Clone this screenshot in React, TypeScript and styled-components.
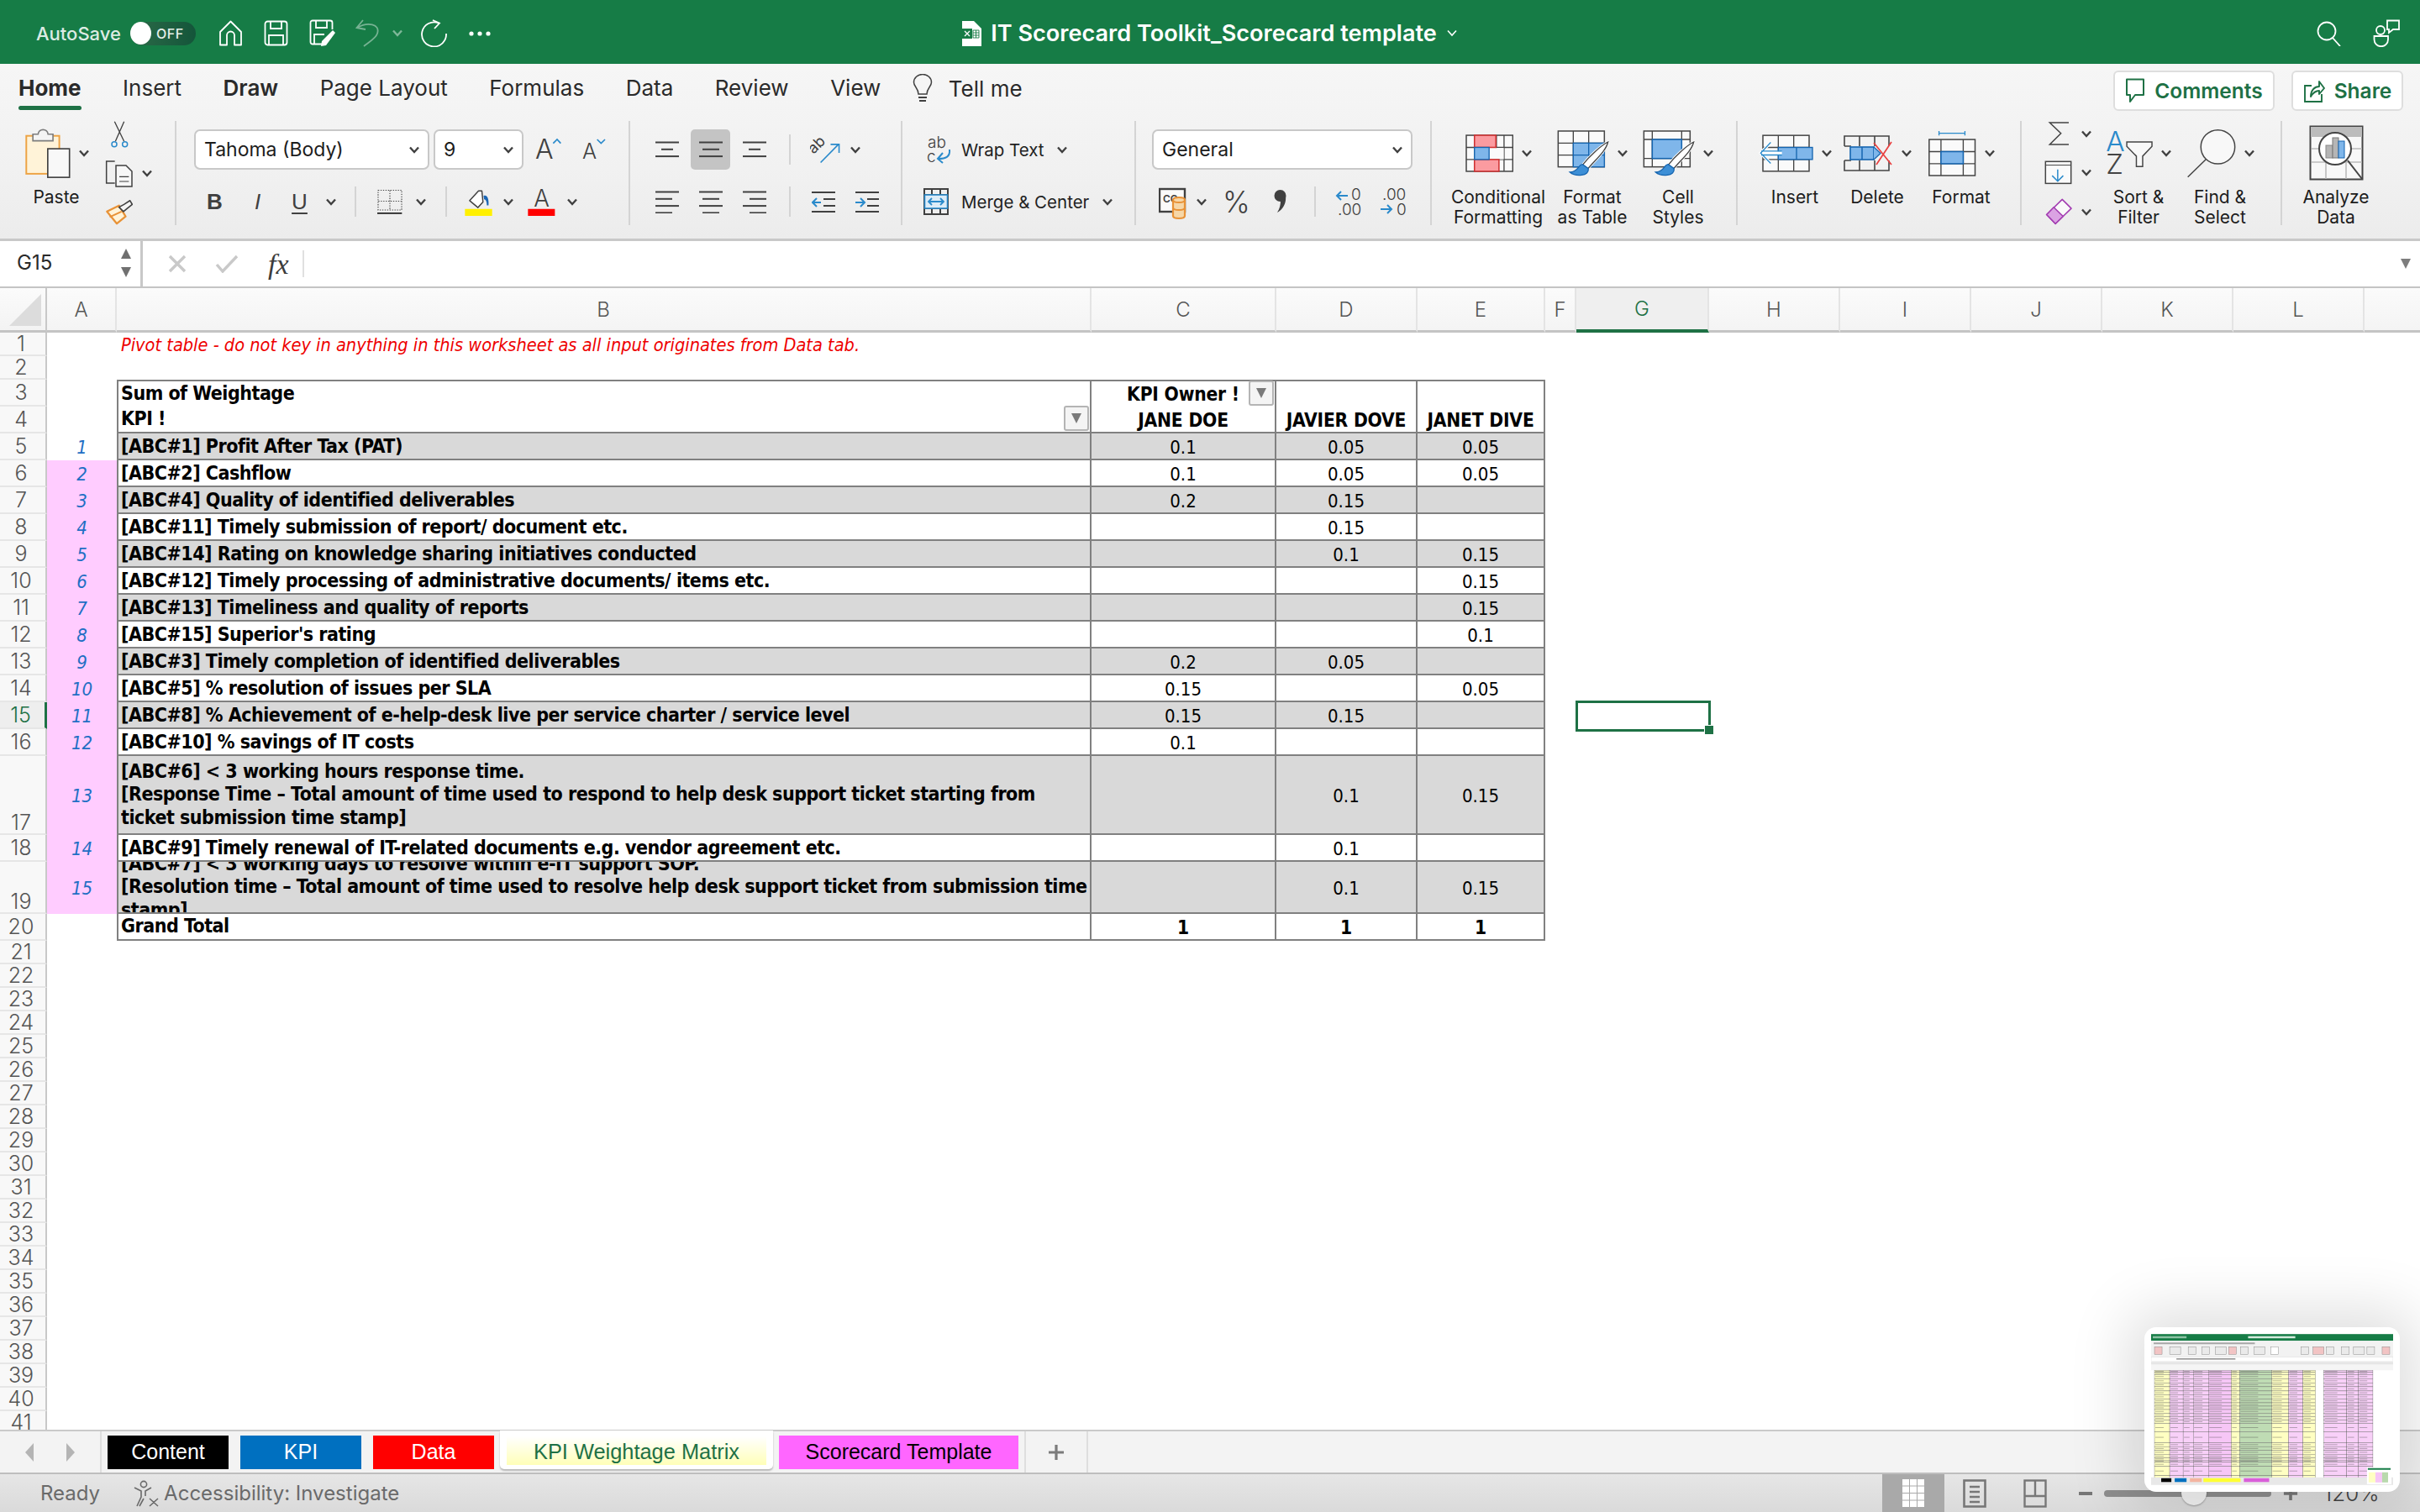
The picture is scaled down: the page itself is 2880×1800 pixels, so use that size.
import React from "react";
import styled, { createGlobalStyle, css } from "styled-components";

const UI = `Inter, "Noto Sans", sans-serif`;
const CELL = `"DejaVu Sans", "Noto Sans", sans-serif`;
const INK = "#404040";
const BLUE = "#2a8acb";
const SEL = "#1e7145";

const Global = createGlobalStyle`
  html, body { margin: 0; padding: 0; width: 2880px; height: 1800px; overflow: hidden; background: #fff; }
  #root { width: 2880px; height: 1800px; }
  * { box-sizing: border-box; }
`;

const Page = styled.div`
  position: relative;
  width: 2880px;
  height: 1800px;
  display: flex;
  flex-direction: column;
  overflow: hidden;
  font-family: ${UI};
  color: #222;
`;

/* ---------- title bar ---------- */
const TitleBar = styled.header`
  height: 76px;
  flex: none;
  background: #167c46;
  display: grid;
  grid-template-columns: 1fr auto 1fr;
  align-items: center;
  color: #fff;
  padding-top: 3px;
`;
const TitleLeft = styled.div`
  display: flex;
  align-items: center;
  padding-left: 43px;
`;
const AutoSaveLabel = styled.span`
  font-size: 22px;
  font-weight: 500;
  color: #dcebe3;
  width: 112px;
`;
const Toggle = styled.div`
  width: 78px;
  height: 28px;
  border-radius: 14px;
  background: linear-gradient(90deg, #2c6b48, #14553a);
  display: flex;
  align-items: center;
  gap: 6px;
  font-size: 16px;
  font-weight: 500;
  letter-spacing: 0.5px;
  color: #e6f0ea;
`;
const Knob = styled.span`
  width: 25px;
  height: 27px;
  border-radius: 50%;
  background: #fff;
  flex: none;
`;
const TitleTool = styled.span<{ $ml: number }>`
  display: flex;
  margin-left: ${(p) => p.$ml}px;
`;
const DocTitle = styled.div`
  display: flex;
  align-items: center;
  font-size: 27.1px;
  font-weight: 600;
  gap: 11px;
  white-space: nowrap;
`;
const TitleRight = styled.div`
  display: flex;
  justify-content: flex-end;
  align-items: center;
  gap: 38px;
  padding-right: 24px;
`;

/* ---------- ribbon ---------- */
const RibbonShell = styled.section`
  flex: none;
  height: 208px;
  background: linear-gradient(180deg, #f6f6f6 0%, #f1f1f1 60%, #ececec 100%);
`;
const RibbonTabs = styled.nav`
  height: 68px;
  padding: 4px 20px 0 22px;
  display: flex;
  align-items: flex-start;
  gap: 49.5px;
`;
const RibbonTab = styled.span<{ $active?: boolean; $bold?: boolean }>`
  position: relative;
  font-size: 26px;
  line-height: 50px;
  height: 51px;
  color: #2a2a2a;
  font-weight: ${(p) => (p.$active ? 700 : p.$bold ? 600 : 400)};
  white-space: nowrap;
  ${(p) =>
    p.$active &&
    css`
      &::after {
        content: "";
        position: absolute;
        left: 0;
        right: 0;
        bottom: 0;
        height: 5px;
        border-radius: 3px;
        background: ${SEL};
      }
    `}
`;
const TellMe = styled.span`
  display: flex;
  align-items: center;
  gap: 19px;
  height: 50px;
  margin-left: -12px;
  font-size: 26px;
  color: #2a2a2a;
`;
const RibbonActions = styled.div`
  margin-left: auto;
  display: flex;
  gap: 20px;
  padding-top: 4px;
`;
const ActionButton = styled.button<{ $w: number }>`
  width: ${(p) => p.$w}px;
  height: 48px;
  background: #fff;
  border: 2px solid #dedede;
  border-radius: 6px;
  display: flex;
  align-items: center;
  justify-content: center;
  gap: 11px;
  font-family: ${UI};
  font-size: 24.5px;
  font-weight: 600;
  color: ${SEL};
  padding: 0;
`;
const Ribbon = styled.div`
  height: 140px;
  display: flex;
`;
const Group = styled.div<{ $w: number; $pl?: number; $last?: boolean }>`
  position: relative;
  width: ${(p) => p.$w}px;
  flex: none;
  height: 124px;
  padding-left: ${(p) => p.$pl ?? 0}px;
  display: flex;
  ${(p) => !p.$last && `border-right: 2px solid #d4d4d4;`}
`;
const RowPair = styled.div`
  width: 100%;
  height: 134px;
  display: grid;
  grid-template-rows: 58px 76px;
`;
const ToolRow = styled.div<{ $top?: boolean }>`
  display: flex;
  align-items: center;
  ${(p) => p.$top && `padding-top: 10px;`}
`;
const Tool = styled.span<{ $ml?: number }>`
  display: inline-flex;
  flex: none;
  align-items: center;
  justify-content: center;
  margin-left: ${(p) => p.$ml ?? 0}px;
`;
const GlyphB = styled.span<{ $ml: number; $i?: boolean; $u?: boolean; $w: number }>`
  margin-left: ${(p) => p.$ml}px;
  width: ${(p) => p.$w}px;
  flex: none;
  font-family: "Liberation Sans", sans-serif;
  font-size: 26px;
  line-height: 30px;
  text-align: center;
  color: ${INK};
  font-weight: ${(p) => (p.$i || p.$u ? 400 : 700)};
  font-style: ${(p) => (p.$i ? "italic" : "normal")};
  ${(p) => p.$u && `text-decoration: underline; text-underline-offset: 4px;`}
`;
const VSep = styled.span<{ $ml: number }>`
  width: 2px;
  height: 36px;
  background: #d4d4d4;
  flex: none;
  margin-left: ${(p) => p.$ml}px;
`;
const Select = styled.div<{ $w: number; $ml?: number }>`
  width: ${(p) => p.$w}px;
  height: 48px;
  flex: none;
  margin-left: ${(p) => p.$ml ?? 0}px;
  background: #fff;
  border: 2px solid #c8c8c8;
  border-radius: 7px;
  display: flex;
  align-items: center;
  justify-content: space-between;
  padding: 0 10px 0 10px;
  font-size: 23px;
  color: #1c1c1c;
`;
const AlignActive = styled.span<{ $ml: number }>`
  width: 47px;
  height: 48px;
  margin-left: ${(p) => p.$ml}px;
  flex: none;
  background: #c4c4c4;
  border-radius: 5px;
  display: flex;
  align-items: center;
  justify-content: center;
`;
const WrapLabel = styled.span<{ $ml: number; $w: number }>`
  margin-left: ${(p) => p.$ml}px;
  width: ${(p) => p.$w}px;
  flex: none;
  font-size: 20.5px;
  color: #222;
  white-space: nowrap;
`;
const Percent = styled.span<{ $ml: number }>`
  margin-left: ${(p) => p.$ml}px;
  width: 32px;
  flex: none;
  font-size: 35px;
  font-weight: 300;
  color: ${INK};
  text-align: center;
`;
const BigTool = styled.div<{ $w: number; $ml?: number }>`
  width: ${(p) => p.$w}px;
  margin-left: ${(p) => p.$ml ?? 0}px;
  flex: none;
  display: flex;
  flex-direction: column;
  align-items: center;
`;
const BigTop = styled.div`
  height: 79px;
  flex: none;
  padding-bottom: 3px;
  display: flex;
  align-items: center;
  gap: 10px;
`;
const BigLabel = styled.div`
  flex: none;
  font-size: 21px;
  line-height: 24px;
  text-align: center;
  color: #1c1c1c;
  white-space: nowrap;
`;
const SmallColumn = styled.div<{ $ml: number }>`
  width: 64px;
  margin-left: ${(p) => p.$ml}px;
  height: 124px;
  flex: none;
  display: flex;
  flex-direction: column;
  justify-content: space-between;
`;
const SmallItem = styled.div`
  display: flex;
  align-items: center;
  gap: 11px;
`;
const ItemCell = styled.span<{ $w: number }>`
  width: ${(p) => p.$w}px;
  display: flex;
  justify-content: center;
  flex: none;
`;

/* ---------- formula bar ---------- */
const FormulaBar = styled.div`
  flex: none;
  height: 59px;
  display: flex;
  align-items: center;
  background: #fff;
  border-top: 3px solid #c8c8c8;
  border-bottom: 2px solid #c4c4c4;
`;
const NameBox = styled.div`
  width: 170px;
  height: 100%;
  flex: none;
  display: flex;
  align-items: center;
  justify-content: space-between;
  padding: 0 10px 3px 20px;
  border-right: 3px solid #c8c8c8;
  font-size: 24px;
  color: #2a2a2a;
`;
const Spinner = styled.span`
  display: flex;
  flex-direction: column;
  gap: 8px;
`;
const Fx = styled.span`
  margin-left: 35px;
  width: 30px;
  padding-top: 1px;
  font-family: "Liberation Serif", serif;
  font-style: italic;
  font-size: 34px;
  color: #3c3c3c;
`;
const FormulaSep = styled.span`
  width: 2px;
  height: 32px;
  background: #e0e0e0;
  margin-left: 11px;
`;
const FormulaEnd = styled.span`
  margin-left: auto;
  padding-right: 10px;
  display: flex;
`;

/* ---------- sheet ---------- */
const SheetViewport = styled.div`
  flex: 1;
  min-height: 0;
  overflow: hidden;
  background: #fff;
`;
const Sheet = styled.table`
  table-layout: fixed;
  border-collapse: separate;
  border-spacing: 0;
  width: 2970px;
  font-family: ${CELL};
  font-stretch: condensed;
  font-size: 22px;
  color: #000;
`;
const Row = styled.tr<{ $h: number }>`
  height: ${(p) => p.$h}px;
`;
const Corner = styled.th`
  padding: 0;
  background: linear-gradient(180deg, #fbfbfb, #f3f3f3);
  border-right: 2px solid #c8c8c8;
  border-bottom: 3px solid #c4c4c4;
  position: relative;
  &::after {
    content: "";
    position: absolute;
    right: 5px;
    bottom: 5px;
    border-style: solid;
    border-width: 0 0 38px 38px;
    border-color: transparent transparent #dcdcdc transparent;
  }
`;
const ColHead = styled.th<{ $sel?: boolean }>`
  padding: 0;
  font-family: ${UI};
  font-weight: 300;
  font-size: 24px;
  text-align: center;
  color: ${(p) => (p.$sel ? SEL : "#555")};
  background: ${(p) => (p.$sel ? "#efefef" : "linear-gradient(180deg, #fbfbfb, #f4f4f4)")};
  border-right: 2px solid #e4e4e4;
  border-bottom: ${(p) => (p.$sel ? `4px solid ${SEL}` : "3px solid #c4c4c4")};
`;
const RowHead = styled.th<{ $sel?: boolean; $tall?: boolean }>`
  padding: 0 4px 0 0;
  font-family: ${UI};
  font-stretch: normal;
  font-weight: 300;
  font-size: 25px;
  line-height: 26px;
  text-align: center;
  vertical-align: ${(p) => (p.$tall ? "bottom" : "middle")};
  color: ${(p) => (p.$sel ? SEL : "#555")};
  background: ${(p) => (p.$sel ? "#eeeeee" : "#f8f8f8")};
  border-bottom: 2px solid #e6e6e6;
  border-right: ${(p) => (p.$sel ? `3px solid ${SEL}` : "2px solid #c8c8c8")};
`;
const NumCell = styled.td<{ $pink?: boolean }>`
  padding: 0;
  text-align: center;
  font-style: italic;
  font-size: 22px;
  color: #1f6fc4;
  background: ${(p) => (p.$pink ? "#ffccff" : "#fff")};
`;
const Note = styled.td`
  padding: 0 0 0 5px;
  color: #ee0000;
  font-style: italic;
  font-size: 21.6px;
  white-space: nowrap;
  overflow: visible;
`;
const LINE = "2px solid #808080";
const KpiCell = styled.td<{ $gray?: boolean; $top?: boolean; $noBottom?: boolean; $up?: boolean }>`
  position: relative;
  padding: 0 0 ${(p) => (p.$up ? 3 : 0)}px 3px;
  font-weight: 700;
  font-size: 23px;
  letter-spacing: -0.5px;
  white-space: nowrap;
  vertical-align: middle;
  background: ${(p) => (p.$gray ? "#d9d9d9" : "#fff")};
  border-left: ${LINE};
  border-right: ${LINE};
  ${(p) => !p.$noBottom && `border-bottom: ${LINE};`}
  ${(p) => p.$top && `border-top: ${LINE};`}
`;
const ValCell = styled.td<{ $gray?: boolean; $top?: boolean; $noBottom?: boolean; $bold?: boolean }>`
  position: relative;
  padding: 2px 0 0;
  text-align: center;
  white-space: nowrap;
  font-weight: ${(p) => (p.$bold ? 700 : 400)};
  ${(p) => p.$bold && `font-size: 22.6px; letter-spacing: -0.2px;`}
  background: ${(p) => (p.$gray ? "#d9d9d9" : "#fff")};
  border-right: ${LINE};
  ${(p) => !p.$noBottom && `border-bottom: ${LINE};`}
  ${(p) => p.$top && `border-top: ${LINE}; padding: 0 0 1px;`}
`;
const Blank = styled.td`
  padding: 0;
`;
const SelectedCell = styled.td`
  position: relative;
  padding: 0;
  &::after {
    content: "";
    position: absolute;
    inset: -2px -2px -3px -1px;
    border: 3px solid ${SEL};
  }
  &::before {
    content: "";
    position: absolute;
    z-index: 1;
    right: -6px;
    bottom: -7px;
    width: 10px;
    height: 10px;
    background: ${SEL};
    border: 1px solid #fff;
  }
`;
const Clip = styled.div<{ $h: number }>`
  height: ${(p) => p.$h}px;
  line-height: 27.5px;
  overflow: hidden;
  display: flex;
  flex-direction: column;
  justify-content: center;
`;
const ClipLine = styled.div`
  flex: none;
`;
const FilterBtn = styled.span`
  position: absolute;
  right: 1px;
  bottom: 1px;
  width: 30px;
  height: 30px;
  background: #f4f4f4;
  border: 2px solid #b4b4b4;
  border-radius: 3px;
  display: flex;
  align-items: center;
  justify-content: center;
`;

/* ---------- sheet tabs and status ---------- */
const TabBar = styled.div`
  flex: none;
  height: 53px;
  background: #f3f3f3;
  border-top: 2px solid #cacaca;
  border-bottom: 2px solid #bebebe;
  display: flex;
  align-items: center;
`;
const TabNav = styled.div`
  width: 121px;
  height: 100%;
  flex: none;
  display: flex;
  align-items: center;
  gap: 37px;
  padding-left: 29px;
  border-right: 2px solid #dedede;
`;
const SheetTab = styled.div<{ $bg: string; $fg: string; $w: number }>`
  width: ${(p) => p.$w}px;
  height: 40px;
  margin-left: 7px;
  margin-right: 7px;
  flex: none;
  display: flex;
  align-items: center;
  justify-content: center;
  background: ${(p) => p.$bg};
  color: ${(p) => p.$fg};
  font-family: "Liberation Sans", sans-serif;
  font-size: 25px;
`;
const ActiveTab = styled.div`
  width: 325px;
  height: 46px;
  flex: none;
  margin: -6px 0 0 0;
  padding: 7px 8px 6px;
  background: #fff;
  border-radius: 0 0 5px 5px;
  box-shadow: 0 2px 2px rgba(0, 0, 0, 0.25);
`;
const ActiveInner = styled.div`
  height: 34px;
  padding-top: 3px;
  display: flex;
  align-items: center;
  justify-content: center;
  background: linear-gradient(180deg, #ffffff 0%, #ffffb8 100%);
  color: ${SEL};
  font-family: "Liberation Sans", sans-serif;
  font-weight: 400;
  font-size: 25.4px;
`;
const AddTab = styled.div`
  width: 76px;
  height: 100%;
  flex: none;
  display: flex;
  align-items: center;
  justify-content: center;
  border-left: 2px solid #dedede;
  border-right: 2px solid #dedede;
`;
const StatusBar = styled.footer`
  flex: none;
  height: 45px;
  background: linear-gradient(180deg, #e6e6e6, #dadada);
  display: flex;
  align-items: center;
  font-size: 24px;
  color: #6a6a6a;
  padding-left: 48px;
`;
const StatusText = styled.span<{ $ml?: number }>`
  margin-left: ${(p) => p.$ml ?? 0}px;
  white-space: nowrap;
`;
const StatusRight = styled.div`
  margin-left: auto;
  height: 100%;
  display: flex;
  align-items: center;
  padding-right: 50px;
`;
const ViewBtn = styled.span<{ $active?: boolean; $w: number }>`
  width: ${(p) => p.$w}px;
  height: 100%;
  display: flex;
  align-items: center;
  justify-content: center;
  ${(p) => p.$active && `background: #a9a9a9;`}
`;
const Minus = styled.span`
  width: 16px;
  height: 4px;
  margin-left: 16px;
  background: #777;
  flex: none;
`;
const Slider = styled.span`
  position: relative;
  width: 199px;
  height: 8px;
  margin: 0 14px;
  flex: none;
  border-radius: 4px;
  background: #8e8e8e;
  &::after {
    content: "";
    position: absolute;
    left: 92px;
    top: -12px;
    width: 30px;
    height: 30px;
    border-radius: 50%;
    background: #f4f4f4;
    box-shadow: 0 1px 2px rgba(0, 0, 0, 0.3);
  }
`;
const Zoom = styled.span`
  margin-left: 30px;
  width: 65px;
  font-size: 26px;
  font-weight: 300;
  color: #444;
`;
const Thumb = styled.aside`
  position: absolute;
  left: 2552px;
  top: 1580px;
  width: 304px;
  height: 196px;
  padding: 8px;
  background: #fff;
  border-radius: 14px;
  box-shadow: 0 0 70px 20px rgba(0, 0, 0, 0.13);
`;

/* ---------- icons ---------- */
const Svg = styled.svg`
  display: block;
  flex: none;
`;
type P = { w?: number; h?: number; c?: string };

const Chev = ({ c = INK }: P) => (
  <Svg width={12} height={9} viewBox="0 0 12 9">
    <path d="M1 1.5 L6 7 L11 1.5" fill="none" stroke={c} strokeWidth={2.4} />
  </Svg>
);
const WhiteChev = () => (
  <Svg width={14} height={9} viewBox="0 0 12 9">
    <path d="M1 1.5 L6 7 L11 1.5" fill="none" stroke="#fff" strokeWidth={1.6} />
  </Svg>
);

const HomeIcon = () => (
  <Svg width={29} height={31} viewBox="0 0 29 31" fill="none" stroke="#fff" strokeWidth={1.8}>
    <path d="M14.5 1.5 L2 14 V29.5 H10 V18 a4.5 4.5 0 0 1 9 0 V29.5 H27 V14 Z" strokeLinejoin="round" />
  </Svg>
);
const SaveIcon = () => (
  <Svg width={29} height={31} viewBox="0 0 29 31" fill="none" stroke="#fff" strokeWidth={1.8}>
    <rect x={1.5} y={1.5} width={26} height={28} rx={3} />
    <path d="M8 1.5 V10 H21 V1.5 M6 29.5 V18 H23 V29.5" />
  </Svg>
);
const SaveAsIcon = () => (
  <Svg width={31} height={33} viewBox="0 0 31 33" fill="none" stroke="#fff" strokeWidth={1.8}>
    <path d="M16 29.5 H4 a2.5 2.5 0 0 1 -2.5 -2.5 V4 a2.5 2.5 0 0 1 2.5 -2.5 H25 a2.5 2.5 0 0 1 2.5 2.5 V12" />
    <path d="M8 1.5 V10 H21 V1.5 M6 29 V18 H18" />
    <path d="M28 13 L31 16 L20 31 L14 32 L15 26 Z" fill="#fff" stroke="none" />
  </Svg>
);
const UndoIcon = () => (
  <Svg width={29} height={33} viewBox="0 0 29 33" fill="none" stroke="rgba(255,255,255,.42)" strokeWidth={1.8}>
    <path d="M9 1 L1.5 10 L12 12 M2 10 C14 3 30 5 26 17 C24 23 16 27 10 32" />
  </Svg>
);
const RedoIcon = () => (
  <Svg width={33} height={33} viewBox="0 0 33 33" fill="none" stroke="#fff" strokeWidth={1.8}>
    <path d="M22 4.5 A14.5 14.5 0 1 0 31 17" />
    <path d="M15 1 L23 4.5 L17 11" />
  </Svg>
);
const DotsIcon = () => (
  <Svg width={26} height={6} viewBox="0 0 26 6" fill="#fff">
    <circle cx={3} cy={3} r={2.6} />
    <circle cx={13} cy={3} r={2.6} />
    <circle cx={23} cy={3} r={2.6} />
  </Svg>
);
const XlsDoc = () => (
  <Svg width={23} height={30} viewBox="0 0 23 30">
    <path d="M0 0 H14 L23 9 V30 H0 Z" fill="#fff" />
    <rect x={0} y={9} width={12} height={12} fill="#167c46" />
    <path d="M3 12 L9 18 M9 12 L3 18" stroke="#fff" strokeWidth={1.3} />
    <path d="M13 11 H20 V20 H13 Z M13 14 H20 M13 17 H20 M16.5 11 V20" fill="none" stroke="#167c46" strokeWidth={0.9} />
  </Svg>
);
const SearchIcon = () => (
  <Svg width={29} height={30} viewBox="0 0 29 30" fill="none" stroke="#fff" strokeWidth={1.8}>
    <ellipse cx={12} cy={12} rx={10.5} ry={10.5} />
    <path d="M19 20 L28 30" />
  </Svg>
);
const PeopleIcon = () => (
  <Svg width={32} height={33} viewBox="0 0 32 33" fill="none" stroke="#fff" strokeWidth={1.8}>
    <circle cx={9} cy={13} r={5} />
    <path d="M1.5 20 H18 V24 a8 8 0 0 1 -16.5 0 Z" />
    <path d="M17 1.5 H31 V12 H24 L19 16 V12 H17 Z" />
  </Svg>
);
const Bulb = () => (
  <Svg width={24} height={34} viewBox="0 0 24 34" fill="none" stroke={INK} strokeWidth={1.5}>
    <path d="M7 24 C7 17 1.5 15 1.5 10 A10.5 9.5 0 0 1 22.5 10 C22.5 15 17 17 17 24 Z" />
    <path d="M7 28 H17 M8 32 H16" strokeWidth={2} />
  </Svg>
);
const CommentIcon = () => (
  <Svg width={24} height={30} viewBox="0 0 24 30" fill="none" stroke={SEL} strokeWidth={2}>
    <path d="M2 1.5 H22 V20 H12 L6 28 V20 H2 Z" strokeLinejoin="round" />
  </Svg>
);
const ShareIcon = () => (
  <Svg width={26} height={30} viewBox="0 0 26 30" fill="none" stroke={SEL} strokeWidth={1.9}>
    <path d="M10 9 H2 V28 H22 V19" />
    <path d="M9 22 C9 14 14 10 19 10 V4 L25 12 L19 19 V15 C15 15 12 17 9 22 Z" strokeLinejoin="round" />
  </Svg>
);

const PasteIcon = () => (
  <Svg width={55} height={62} viewBox="68 22 168 188">
    <rect x={75} y={54} width={120} height={138} fill="#fff3d8" stroke="#eda344" strokeWidth={6} />
    <path d="M99 72 V48 H118 C120 26 152 26 154 48 H172 V72 Z" fill="#f4f4f4" stroke="#7d7d7d" strokeWidth={5} />
    <rect x={153} y={101} width={79} height={104} fill="#f8f8f8" stroke={INK} strokeWidth={5} />
  </Svg>
);
const Scissors = () => (
  <Svg width={22} height={32} viewBox="362 15 66 96" fill="none">
    <path d="M378 17 L412 88 M412 17 L381 88" stroke={INK} strokeWidth={4} />
    <circle cx={377} cy={98} r={9} stroke={BLUE} strokeWidth={4.5} />
    <circle cx={415} cy={98} r={9} stroke={BLUE} strokeWidth={4.5} />
  </Svg>
);
const CopyIcon = () => (
  <Svg width={33} height={32} viewBox="347 147 99 96" fill="none" stroke={INK} strokeWidth={4.5}>
    <path d="M382 150 H352 V228 H382" />
    <path d="M386 165 H422 L443 186 V240 H386 Z" fill="#f7f7f7" />
    <path d="M398 205 H432 M398 222 H432" strokeWidth={3.5} />
  </Svg>
);
const Painter = () => (
  <Svg width={32} height={31} viewBox="348 278 98 92" fill="none">
    <path d="M352 322 L396 300 L420 340 L388 366 Z" fill="#fff3d8" stroke="#e89237" strokeWidth={7} strokeLinejoin="round" />
    <path d="M362 342 L405 322" stroke="#e89237" strokeWidth={6} />
    <path d="M396 306 L412 322 L424 312 L444 296 L436 282 L414 296 Z" fill="#f4f4f4" stroke={INK} strokeWidth={5} strokeLinejoin="round" />
  </Svg>
);

const FontUp = () => (
  <Svg width={32} height={30} viewBox="352 50 96 88">
    <text x={352} y={128} fontFamily="Inter, sans-serif" fontWeight={300} fontSize={96} fill={INK}>A</text>
    <path d="M416 72 L430 58 L443 72" fill="none" stroke={BLUE} strokeWidth={5} />
  </Svg>
);
const FontDown = () => (
  <Svg width={28} height={30} viewBox="518 50 84 88">
    <text x={518} y={128} fontFamily="Inter, sans-serif" fontWeight={300} fontSize={76} fill={INK}>A</text>
    <path d="M571 58 L585 72 L599 58" fill="none" stroke={BLUE} strokeWidth={5} />
  </Svg>
);
const BordersIcon = () => (
  <Svg width={30} height={31} viewBox="1314 242 92 92" fill="none">
    <rect x={1317} y={245} width={86} height={72} stroke={INK} strokeWidth={3.5} strokeDasharray="4 5" />
    <path d="M1318 285 H1402 M1360 246 V318" stroke={INK} strokeWidth={3.5} strokeDasharray="4 5" />
    <path d="M1314 329 H1404" stroke="#111" strokeWidth={5} />
  </Svg>
);
const FillIcon = () => (
  <Svg width={33} height={33} viewBox="100 240 100 100">
    <path d="M118 285 L150 250 L162 250 L166 290 L148 310 Z" fill="#fff" stroke={INK} strokeWidth={4.5} strokeLinejoin="round" />
    <path d="M168 268 C182 262 188 280 186 302 L180 302 C180 290 178 282 170 280 Z" fill="#1b66b5" />
    <rect x={101} y={315} width={98} height={25} fill="#fff000" />
  </Svg>
);
const ColorA = () => (
  <Svg width={33} height={33} viewBox="329 240 100 100">
    <text x={351} y={308} fontFamily="Inter, sans-serif" fontWeight={300} fontSize={84} fill={INK}>A</text>
    <rect x={330} y={315} width={97} height={25} fill="#ff0000" />
  </Svg>
);

const Lines = ({ rows, h = 20 }: { rows: [number, number][]; h?: number }) => (
  <Svg width={28} height={h} viewBox={`0 0 28 ${h}`}>
    {rows.map(([x1, x2], i) => (
      <path key={i} d={`M${x1} ${1.5 + i * 8.3} H${x2}`} stroke={INK} strokeWidth={2} />
    ))}
  </Svg>
);
const OrientIcon = () => (
  <Svg width={36} height={34} viewBox="1330 48 100 94">
    <text x={1342} y={112} transform="rotate(-45 1342 112)" fontFamily="Inter, sans-serif" fontSize={50} fill={INK}>ab</text>
    <path d="M1365 138 L1424 78 M1398 78 H1426 V106" fill="none" stroke={BLUE} strokeWidth={4.5} />
  </Svg>
);
const Indent = ({ flip }: { flip?: boolean }) => (
  <Svg width={28} height={26} viewBox="0 0 28 26">
    <path d="M0 2 H28 M14 10 H28 M14 18 H28 M0 25 H28" stroke={INK} strokeWidth={2} />
    {flip ? (
      <path d="M0 14 H10 M6 9 L11 14 L6 19" fill="none" stroke={BLUE} strokeWidth={2} />
    ) : (
      <path d="M11 14 H1 M6 9 L1 14 L6 19" fill="none" stroke={BLUE} strokeWidth={2} />
    )}
  </Svg>
);
const WrapIcon = () => (
  <Svg width={30} height={34} viewBox="0 0 30 34">
    <text x={1} y={15} fontFamily="Inter, sans-serif" fontWeight={300} fontSize={19} fill={INK}>ab</text>
    <text x={0} y={32} fontFamily="Inter, sans-serif" fontWeight={300} fontSize={19} fill={INK}>c</text>
    <path d="M27 17 C28 26 22 28 14 28 M19 21 L13 28 L19 33" fill="none" stroke={BLUE} strokeWidth={2} />
  </Svg>
);
const MergeIcon = () => (
  <Svg width={30} height={32} viewBox="0 0 30 32" fill="none">
    <rect x={1} y={1} width={28} height={30} stroke={INK} strokeWidth={2} />
    <path d="M1 8 H29 M1 24 H29 M10 1 V8 M20 1 V8 M10 24 V31 M20 24 V31" stroke={INK} strokeWidth={2} />
    <rect x={1.5} y={8} width={27} height={16} fill="#dcecf8" stroke={BLUE} strokeWidth={1.6} />
    <path d="M6 16 H24 M10 12 L6 16 L10 20 M20 12 L24 16 L20 20" stroke={BLUE} strokeWidth={1.8} />
  </Svg>
);
const CurrencyIcon = () => (
  <Svg width={33} height={47} viewBox="0 0 33 47">
    <rect x={1} y={8} width={30} height={27} fill="#fafafa" stroke={INK} strokeWidth={2.4} />
    <text x={5} y={24} fontFamily="Inter, sans-serif" fontWeight={600} fontSize={12} fill={INK}>CC</text>
    <path d="M17 21 C17 17 31 17 31 21 V40 C31 44 17 44 17 40 Z" fill="#f6d7a8" stroke="#e89237" strokeWidth={2.2} />
    <path d="M17 21 C17 25 31 25 31 21 M17 30 C17 34 31 34 31 30" fill="none" stroke="#e89237" strokeWidth={2} />
  </Svg>
);
const CommaIcon = () => (
  <Svg width={17} height={28} viewBox="0 0 17 28">
    <circle cx={8.5} cy={7} r={7} fill={INK} />
    <path d="M15 7 C16 16 12 23 5 27 C8 22 9 18 9 13 Z" fill={INK} />
  </Svg>
);
const DecUp = () => (
  <Svg width={33} height={34} viewBox="0 0 33 34">
    <text x={19} y={15} fontFamily="Inter, sans-serif" fontWeight={300} fontSize={19} fill={INK}>0</text>
    <text x={3} y={33} fontFamily="Inter, sans-serif" fontWeight={300} fontSize={19} fill={INK}>.00</text>
    <path d="M15 10 H2 M7 5 L2 10 L7 15" fill="none" stroke={BLUE} strokeWidth={2} />
  </Svg>
);
const DecDown = () => (
  <Svg width={33} height={34} viewBox="0 0 33 34">
    <text x={3} y={15} fontFamily="Inter, sans-serif" fontWeight={300} fontSize={19} fill={INK}>.00</text>
    <text x={20} y={33} fontFamily="Inter, sans-serif" fontWeight={300} fontSize={19} fill={INK}>0</text>
    <path d="M1 26 H14 M9 21 L14 26 L9 31" fill="none" stroke={BLUE} strokeWidth={2} />
  </Svg>
);

const DARK = "#444";
const BF = "#7fb6ea";
const BS = "#1565b0";
const Brush = ({ dx = 0 }: { dx?: number }) => (
  <g transform={`translate(${dx} 0)`}>
    <path d="M594 86 C570 98 528 136 503 168 L522 182 C548 150 586 120 594 86 Z" fill="#fff" stroke="#fff" strokeWidth={9} />
    <path d="M594 86 C570 98 528 136 503 168 L522 182 C548 150 586 120 594 86 Z" fill="#fff" stroke={DARK} strokeWidth={4} />
    <path d="M503 166 C488 164 490 194 458 194 C476 210 530 210 523 180 Z" fill="#3d8fd6" stroke={BS} strokeWidth={4} />
  </g>
);
const CondIcon = () => (
  <Svg width={57} height={45} viewBox="68 44 170 134" fill="none">
    <rect x={71} y={47} width={165} height={128} fill="#fafafa" stroke={DARK} strokeWidth={4.5} />
    <path d="M178 47 V175 M205 47 V175 M71 90 H236 M71 133 H236 M100 47 V175" stroke={DARK} strokeWidth={4} />
    <rect x={152} y={92} width={52} height={40} fill="#fafafa" />
    <rect x={100} y={47} width={76} height={43} fill="#fb9ba0" stroke="#cf2f2f" strokeWidth={4.5} />
    <rect x={100} y={133} width={87} height={42} fill="#fb9ba0" stroke="#cf2f2f" strokeWidth={4.5} />
    <rect x={100} y={90} width={52} height={43} fill={BF} stroke={BS} strokeWidth={4} />
  </Svg>
);
const TableIcon = () => (
  <Svg width={62} height={55} viewBox="412 44 186 165" fill="none">
    <rect x={416} y={47} width={165} height={128} fill="#fafafa" stroke={DARK} strokeWidth={4.5} />
    <path d="M470 47 V175 M525 47 V175 M416 90 H581 M416 133 H581" stroke={DARK} strokeWidth={4} />
    <rect x={470} y={90} width={111} height={85} fill={BF} stroke={BS} strokeWidth={4} />
    <path d="M525 90 V175 M470 133 H581" stroke={BS} strokeWidth={4} />
    <Brush />
  </Svg>
);
const StylesIcon = () => (
  <Svg width={62} height={55} viewBox="712 44 186 165" fill="none">
    <rect x={716} y={47} width={165} height={128} fill="#fafafa" stroke={DARK} strokeWidth={4.5} />
    <path d="M746 47 V175 M851 47 V175 M716 77 H881 M716 145 H881" stroke={DARK} strokeWidth={4} />
    <rect x={746} y={77} width={105} height={68} fill={BF} stroke={BS} strokeWidth={4.5} />
    <Brush dx={300} />
  </Svg>
);
const InsertIcon = () => (
  <Svg width={65} height={45} viewBox="1115 44 195 134" fill="none">
    <rect x={1130} y={47} width={165} height={128} fill="#fafafa" stroke={DARK} strokeWidth={4.5} />
    <path d="M1185 47 V175 M1240 47 V175 M1130 90 H1295 M1130 133 H1295" stroke={DARK} strokeWidth={4} />
    <rect x={1185} y={90} width={122} height={43} fill={BF} stroke={BS} strokeWidth={4} />
    <path d="M1250 90 V133" stroke={BS} strokeWidth={4} />
    <path d="M1158 72 L1122 110 L1158 147 M1124 110 H1198" stroke="#fff" strokeWidth={11} />
    <path d="M1158 72 L1122 110 L1158 147 M1124 103 H1198 M1124 117 H1198" stroke={BLUE} strokeWidth={4} />
  </Svg>
);
const DeleteIcon = () => (
  <Svg width={60} height={45} viewBox="0 0 60 45" fill="none">
    <path d="M2 14 V2 H55 V14 M2 31 V43 H55 V31 M20 2 V14 M38 2 V14 M20 31 V43 M38 31 V43 M2 14 H10 M2 31 H10" stroke={DARK} strokeWidth={1.6} />
    <rect x={9} y={15} width={28} height={15} fill={BF} stroke={BS} strokeWidth={1.6} />
    <path d="M23 15 V30" stroke={BS} strokeWidth={1.5} />
    <path d="M37 15 L45 22.5 L37 30" fill={BF} stroke={BS} strokeWidth={1.2} />
    <path d="M37 10 L58 36 M58 9 L40 36" stroke="#e84040" strokeWidth={1.7} />
  </Svg>
);
const FormatIcon = () => (
  <Svg width={58} height={55} viewBox="167 14 170 164" fill="none">
    <path d="M206 25 H298 M206 17 V33 M298 17 V33" stroke={BLUE} strokeWidth={4} />
    <rect x={171} y={47} width={163} height={128} fill="#fafafa" stroke={DARK} strokeWidth={4.5} />
    <path d="M213 47 V175 M292 47 V175 M171 90 H334 M171 133 H334" stroke={DARK} strokeWidth={4} />
    <rect x={213} y={90} width={79} height={43} fill={BF} stroke={BS} strokeWidth={4.5} />
  </Svg>
);
const Sigma = () => (
  <Svg width={26} height={30} viewBox="585 18 78 90" fill="none">
    <path d="M660 24 H592 L632 62 L592 102 H660" stroke={DARK} strokeWidth={4.5} />
  </Svg>
);
const FillDown = () => (
  <Svg width={33} height={29} viewBox="574 152 100 86" fill="none">
    <rect x={578} y={155} width={92} height={79} fill="#fafafa" stroke={DARK} strokeWidth={4.5} />
    <path d="M578 168 H670" stroke={DARK} strokeWidth={3} />
    <path d="M622 184 V224 M602 206 L622 226 L642 206" stroke={BLUE} strokeWidth={4.5} />
  </Svg>
);
const Eraser = () => (
  <Svg width={32} height={32} viewBox="575 280 95 95" fill="none">
    <path d="M580 338 L635 284 L667 316 L611 370 Z" fill="#fafafa" stroke="#a23cb1" strokeWidth={4.5} strokeLinejoin="round" />
    <path d="M580 338 L605 312 L638 344 L611 370 Z" fill="#dba3e3" stroke="#a23cb1" strokeWidth={4.5} />
  </Svg>
);
const SortIcon = () => (
  <Svg width={56} height={54} viewBox="795 30 172 164" fill="none">
    <text x={796} y={105} fontFamily="Inter, sans-serif" fontWeight={300} fontSize={102} fill={BLUE}>A</text>
    <text x={796} y={188} fontFamily="Inter, sans-serif" fontWeight={300} fontSize={102} fill={DARK}>Z</text>
    <path d="M872 72 H964 V88 L930 124 V162 H907 V124 L872 88 Z" fill="#f8f8f8" stroke={DARK} strokeWidth={4.5} />
  </Svg>
);
const FindIcon = () => (
  <Svg width={59} height={59} viewBox="1090 24 178 178" fill="none">
    <circle cx={1203} cy={90} r={61} fill="#f8f8f8" stroke={DARK} strokeWidth={4.5} />
    <path d="M1160 135 L1095 198" stroke={DARK} strokeWidth={4.5} />
  </Svg>
);
const AnalyzeIcon = () => (
  <Svg width={65} height={66} viewBox="0 0 65 66" fill="none">
    <rect x={1.5} y={1.5} width={62} height={63} fill="#f8f8f8" stroke={DARK} strokeWidth={2} />
    <rect x={2} y={2} width={61} height={12} fill="#bcbcbc" />
    <path d="M3 28 H63 M3 44 H63 M20 14 V64 M44 14 V64" stroke="#bbb" strokeWidth={1.6} />
    <circle cx={31} cy={28} r={19} fill="#fff" stroke={DARK} strokeWidth={2} />
    <path d="M46 42 L63 64" stroke={DARK} strokeWidth={2} />
    <rect x={20} y={24} width={8} height={15} fill="#b5b5b5" stroke="#888" />
    <rect x={28} y={15} width={7} height={24} fill="#b5b5b5" stroke="#777" />
    <rect x={35} y={19} width={7} height={20} fill={BF} stroke={BS} />
  </Svg>
);
const Tri = ({ c = "#7a7a7a", up, w = 14, h = 14 }: { c?: string; up?: boolean; w?: number; h?: number }) => (
  <Svg width={w} height={h} viewBox="0 0 14 14">
    <path d={up ? "M7 1 L13 13 H1 Z" : "M1 1 H13 L7 13 Z"} fill={c} />
  </Svg>
);
const ArrowSide = ({ right }: { right?: boolean }) => (
  <Svg width={12} height={24} viewBox="0 0 12 24">
    <path d={right ? "M1 1 L11 12 L1 23 Z" : "M11 1 L1 12 L11 23 Z"} fill="#b4b4b4" />
  </Svg>
);
const CrossIcon = () => (
  <Svg width={22} height={22} viewBox="0 0 22 22">
    <path d="M2 2 L20 20 M20 2 L2 20" stroke="#c9c9c9" strokeWidth={3.4} />
  </Svg>
);
const CheckIcon = () => (
  <Svg width={28} height={22} viewBox="0 0 28 22">
    <path d="M2 12 L9 20 L26 2" stroke="#c9c9c9" strokeWidth={3.4} fill="none" />
  </Svg>
);
const A11yIcon = () => (
  <Svg width={31} height={32} viewBox="0 0 31 32" fill="none" stroke="#6a6a6a" strokeWidth={1.6}>
    <circle cx={13} cy={5} r={3.6} />
    <path d="M2 9 L10 13 V20 L5 31 M22 9 L15 13 V19 M20 22 L30 31 M30 22 L20 31 M8 31 L13 22" />
  </Svg>
);
const Plus = ({ s = 20, c = "#7b7b7b", t = 3.2 }: { s?: number; c?: string; t?: number }) => (
  <Svg width={s} height={s} viewBox="0 0 20 20">
    <path d="M10 1 V19 M1 10 H19" stroke={c} strokeWidth={t} />
  </Svg>
);
const GridView = () => (
  <Svg width={26} height={33} viewBox="0 0 26 33">
    {[0, 1, 2].flatMap((x) =>
      [0, 1, 2, 3].map((y) => <rect key={`${x}${y}`} x={x * 9} y={y * 8.5} width={8} height={7.5} fill="#fff" />)
    )}
  </Svg>
);
const PageView = () => (
  <Svg width={28} height={34} viewBox="0 0 28 34" fill="none" stroke="#777" strokeWidth={2.6}>
    <rect x={1.5} y={1.5} width={25} height={31} />
    <path d="M8 9 H20 M8 15 H20 M8 21 H20 M8 27 H20" />
  </Svg>
);
const BreakView = () => (
  <Svg width={28} height={34} viewBox="0 0 28 34" fill="none" stroke="#777" strokeWidth={2.4}>
    <rect x={1.5} y={1.5} width={25} height={31} />
    <path d="M1.5 20 H26 M14 1.5 V20" />
  </Svg>
);

/* thumbnail: a miniature picture of another sheet */
const thumbRows = [2.5, 2.5, 5, 5, 4.5, 5, 4.5, 5, 4.5, 4, 4, 4.5, 4, 4, 4, 10, 13, 4.5, 4.5, 4.5, 4.5, 2.5, 2.5, 5, 11, 9];
const thumbCols: [number, number, string][] = [
  [4, 22, "#ffffc2"],
  [22, 38, "#f8d0f8"],
  [38, 50, "#f8d0f8"],
  [50, 68, "#f8d0f8"],
  [68, 95, "#f6c6f6"],
  [95, 105, "#ffffc2"],
  [105, 143, "#bfdcb4"],
  [143, 163, "#ffffc2"],
  [163, 180, "#f8d0f8"],
  [180, 195, "#ffffc2"],
  [205, 232, "#f8d0f8"],
  [232, 246, "#f8d0f8"],
  [246, 263, "#f8d0f8"],
];
const Miniature = () => {
  let y = 43;
  const cells = thumbRows.map((h, r) => {
    const top = y;
    y += h;
    return (
      <g key={r}>
        {thumbCols.map(([a, b, c], i) => (
          <g key={i}>
            <rect x={a} y={top} width={b - a} height={h} fill={c} stroke="#5f5f5f" strokeWidth={0.35} />
            <rect x={a + 1} y={top + h / 2 - 0.5} width={(b - a) * 0.55} height={0.9} fill="#444" opacity={0.42} />
          </g>
        ))}
      </g>
    );
  });
  return (
    <Svg width={288} height={180} viewBox="0 0 287 179">
      <rect width={287} height={179} fill="#fff" />
      <rect width={287} height={8} fill="#167c46" />
      <rect x={115} y={2.5} width={56} height={2.5} fill="#d5eadd" />
      <rect x={2} y={2.5} width={40} height={2.5} fill="#8cc2a4" />
      <rect y={8} width={287} height={19} fill="#f2f2f2" />
      <rect x={3} y={10} width={120} height={2} fill="#777" opacity={0.6} />
      {[4, 22, 44, 60, 76, 92, 106, 122, 142, 178, 192, 208, 226, 240, 256, 274].map((x, i) => (
        <rect key={i} x={x} y={15} width={i % 3 === 1 ? 13 : 9} height={9} fill={i === 8 ? "#fff" : i % 5 === 0 ? "#f2c4c4" : "#eaeaea"} stroke="#777" strokeWidth={0.4} />
      ))}
      <rect y={27} width={287} height={5} fill="#fff" stroke="#ccc" strokeWidth={0.4} />
      <rect x={30} y={28.7} width={70} height={1.6} fill="#666" opacity={0.7} />
      <rect y={32} width={287} height={11} fill="#f5f5f5" />
      <rect x={0} y={33} width={287} height={3} fill="#e6e6e6" />
      {cells}
      <rect y={170} width={287} height={9} fill="#e8e8e8" />
      <rect x={12} y={171} width={12} height={4.5} fill="#000" />
      <rect x={28} y={171} width={14} height={4.5} fill="#0070c0" />
      <rect x={46} y={171} width={14} height={4.5} fill="#f4b4a0" />
      <rect x={62} y={171} width={44} height={4.5} fill="#ffff33" />
      <rect x={110} y={171} width={30} height={4.5} fill="#d95fd9" />
      <rect x={256} y={158} width={29} height={20} fill="#fff" />
      <rect x={257} y={159} width={27} height={2} fill="#167c46" />
      <rect x={258} y={164} width={8} height={12} fill="#ffffc2" />
      <rect x={266} y={164} width={8} height={12} fill="#f6c6f6" />
      <rect x={274} y={164} width={7} height={12} fill="#b9d9ad" />
    </Svg>
  );
};

/* ---------- data ---------- */
type KpiRow = { n: number; t: React.ReactNode; c?: string; d?: string; e?: string; h?: number };
const kpis: KpiRow[] = [
  { n: 1, t: "[ABC#1] Profit After Tax (PAT)", c: "0.1", d: "0.05", e: "0.05" },
  { n: 2, t: "[ABC#2] Cashflow", c: "0.1", d: "0.05", e: "0.05" },
  { n: 3, t: "[ABC#4] Quality of identified deliverables", c: "0.2", d: "0.15" },
  { n: 4, t: "[ABC#11] Timely submission of report/ document etc.", d: "0.15" },
  { n: 5, t: "[ABC#14] Rating on knowledge sharing initiatives conducted", d: "0.1", e: "0.15" },
  { n: 6, t: "[ABC#12] Timely processing of administrative documents/ items etc.", e: "0.15" },
  { n: 7, t: "[ABC#13] Timeliness and quality of reports", e: "0.15" },
  { n: 8, t: "[ABC#15] Superior's rating", e: "0.1" },
  { n: 9, t: "[ABC#3] Timely completion of identified deliverables", c: "0.2", d: "0.05" },
  { n: 10, t: "[ABC#5] % resolution of issues per SLA", c: "0.15", e: "0.05" },
  { n: 11, t: "[ABC#8] % Achievement of e-help-desk live per service charter / service level", c: "0.15", d: "0.15" },
  { n: 12, t: "[ABC#10] % savings of IT costs", c: "0.1" },
  {
    n: 13,
    h: 94,
    t: (
      <Clip $h={90}>
        <ClipLine>[ABC#6] &lt; 3 working hours response time.</ClipLine>
        <ClipLine>[Response Time – Total amount of time used to respond to help desk support ticket starting from</ClipLine>
        <ClipLine>ticket submission time stamp]</ClipLine>
      </Clip>
    ),
    d: "0.1",
    e: "0.15",
  },
  { n: 14, t: "[ABC#9] Timely renewal of IT-related documents e.g. vendor agreement etc.", d: "0.1" },
  {
    n: 15,
    h: 62,
    t: (
      <Clip $h={60}>
        <ClipLine>[ABC#7] &lt; 3 working days to resolve within e-IT support SOP.</ClipLine>
        <ClipLine>[Resolution time – Total amount of time used to resolve help desk support ticket from submission time</ClipLine>
        <ClipLine>stamp]</ClipLine>
      </Clip>
    ),
    d: "0.1",
    e: "0.15",
  },
];
const colHeads = ["H", "I", "J", "K", "L", "M"];
const widths = [56, 83, 1160, 220, 168, 152, 37, 158, 156, 156, 156, 156, 156, 156];
const trailing = [21, 22, 23, 24, 25, 26, 27, 28, 29, 30, 31, 32, 33, 34, 35, 36, 37, 38, 39, 40, 41];

export default function App() {
  return (
    <Page>
      <Global />
      <TitleBar>
        <TitleLeft>
          <AutoSaveLabel>AutoSave</AutoSaveLabel>
          <Toggle>
            <Knob />
            OFF
          </Toggle>
          <TitleTool $ml={27}><HomeIcon /></TitleTool>
          <TitleTool $ml={25}><SaveIcon /></TitleTool>
          <TitleTool $ml={25}><SaveAsIcon /></TitleTool>
          <TitleTool $ml={24}><UndoIcon /></TitleTool>
          <TitleTool $ml={15}><Chev c="rgba(255,255,255,.45)" /></TitleTool>
          <TitleTool $ml={21}><RedoIcon /></TitleTool>
          <TitleTool $ml={25}><DotsIcon /></TitleTool>
        </TitleLeft>
        <DocTitle>
          <XlsDoc />
          IT Scorecard Toolkit_Scorecard template
          <WhiteChev />
        </DocTitle>
        <TitleRight>
          <SearchIcon />
          <PeopleIcon />
        </TitleRight>
      </TitleBar>

      <RibbonShell>
        <RibbonTabs>
          <RibbonTab $active>Home</RibbonTab>
          <RibbonTab>Insert</RibbonTab>
          <RibbonTab $bold>Draw</RibbonTab>
          <RibbonTab>Page Layout</RibbonTab>
          <RibbonTab>Formulas</RibbonTab>
          <RibbonTab>Data</RibbonTab>
          <RibbonTab>Review</RibbonTab>
          <RibbonTab>View</RibbonTab>
          <TellMe><Bulb />Tell me</TellMe>
          <RibbonActions>
            <ActionButton $w={192}><CommentIcon />Comments</ActionButton>
            <ActionButton $w={133}><ShareIcon />Share</ActionButton>
          </RibbonActions>
        </RibbonTabs>
        <Ribbon>
          <Group $w={210} $pl={16}>
            <BigTool $w={102}>
              <BigTop>
                <PasteIcon />
                <Chev />
              </BigTop>
              <BigLabel>Paste</BigLabel>
            </BigTool>
            <SmallColumn $ml={7}>
              <SmallItem><ItemCell $w={33}><Scissors /></ItemCell></SmallItem>
              <SmallItem><ItemCell $w={33}><CopyIcon /></ItemCell><Chev /></SmallItem>
              <SmallItem><ItemCell $w={33}><Painter /></ItemCell></SmallItem>
            </SmallColumn>
          </Group>

          <Group $w={540} $pl={21}>
            <RowPair>
              <ToolRow $top>
                <Select $w={280}>Tahoma (Body)<Chev /></Select>
                <Select $w={107} $ml={5}>9<Chev /></Select>
                <Tool $ml={14}><FontUp /></Tool>
                <Tool $ml={24}><FontDown /></Tool>
              </ToolRow>
              <ToolRow>
                <GlyphB $ml={15} $w={17}>B</GlyphB>
                <GlyphB $ml={36} $w={15} $i>I</GlyphB>
                <GlyphB $ml={32} $w={21} $u>U</GlyphB>
                <Tool $ml={21}><Chev /></Tool>
                <VSep $ml={22} />
                <Tool $ml={25}><BordersIcon /></Tool>
                <Tool $ml={16}><Chev /></Tool>
                <VSep $ml={23} />
                <Tool $ml={21}><FillIcon /></Tool>
                <Tool $ml={13}><Chev /></Tool>
                <Tool $ml={17}><ColorA /></Tool>
                <Tool $ml={14}><Chev /></Tool>
              </ToolRow>
            </RowPair>
          </Group>

          <Group $w={324} $pl={30}>
            <RowPair>
              <ToolRow $top>
                <Tool><Lines rows={[[0, 28], [7, 21], [0, 28]]} /></Tool>
                <AlignActive $ml={14}><Lines rows={[[0, 28], [4, 24], [0, 28]]} /></AlignActive>
                <Tool $ml={15}><Lines rows={[[0, 28], [7, 21], [0, 28]]} /></Tool>
                <VSep $ml={27} />
                <Tool $ml={23}><OrientIcon /></Tool>
                <Tool $ml={12}><Chev /></Tool>
              </ToolRow>
              <ToolRow>
                <Tool><Lines h={27} rows={[[0, 28], [0, 20], [0, 28], [0, 20]]} /></Tool>
                <Tool $ml={24}><Lines h={27} rows={[[0, 28], [4, 24], [0, 28], [4, 24]]} /></Tool>
                <Tool $ml={24}><Lines h={27} rows={[[0, 28], [8, 28], [0, 28], [8, 28]]} /></Tool>
                <VSep $ml={27} />
                <Tool $ml={25}><Indent /></Tool>
                <Tool $ml={24}><Indent flip /></Tool>
              </ToolRow>
            </RowPair>
          </Group>

          <Group $w={278}>
            <RowPair>
              <ToolRow $top>
                <Tool $ml={29}><WrapIcon /></Tool>
                <WrapLabel $ml={11} $w={102}>Wrap Text</WrapLabel>
                <Tool $ml={12}><Chev /></Tool>
              </ToolRow>
              <ToolRow>
                <Tool $ml={25}><MergeIcon /></Tool>
                <WrapLabel $ml={15} $w={160}>Merge &amp; Center</WrapLabel>
                <Tool $ml={8}><Chev /></Tool>
              </ToolRow>
            </RowPair>
          </Group>

          <Group $w={352}>
            <RowPair>
              <ToolRow $top>
                <Select $w={310} $ml={19}>General<Chev /></Select>
              </ToolRow>
              <ToolRow>
                <Tool $ml={27}><CurrencyIcon /></Tool>
                <Tool $ml={12}><Chev /></Tool>
                <Percent $ml={19}>%</Percent>
                <Tool $ml={28}><CommaIcon /></Tool>
                <VSep $ml={32} />
                <Tool $ml={23}><DecUp /></Tool>
                <Tool $ml={20}><DecDown /></Tool>
              </ToolRow>
            </RowPair>
          </Group>

          <Group $w={364} $pl={21}>
            <BigTool $w={116}>
              <BigTop><CondIcon /><Chev /></BigTop>
              <BigLabel>Conditional<br />Formatting</BigLabel>
            </BigTool>
            <BigTool $w={108}>
              <BigTop><TableIcon /><Chev /></BigTop>
              <BigLabel>Format<br />as Table</BigLabel>
            </BigTool>
            <BigTool $w={96}>
              <BigTop><StylesIcon /><Chev /></BigTop>
              <BigLabel>Cell<br />Styles</BigLabel>
            </BigTool>
          </Group>

          <Group $w={338} $pl={20}>
            <BigTool $w={96}>
              <BigTop><InsertIcon /><Chev /></BigTop>
              <BigLabel>Insert</BigLabel>
            </BigTool>
            <BigTool $w={100}>
              <BigTop><DeleteIcon /><Chev /></BigTop>
              <BigLabel>Delete</BigLabel>
            </BigTool>
            <BigTool $w={100}>
              <BigTop><FormatIcon /><Chev /></BigTop>
              <BigLabel>Format</BigLabel>
            </BigTool>
          </Group>

          <Group $w={310} $pl={27}>
            <SmallColumn $ml={0}>
              <SmallItem><ItemCell $w={33}><Sigma /></ItemCell><Chev /></SmallItem>
              <SmallItem><ItemCell $w={33}><FillDown /></ItemCell><Chev /></SmallItem>
              <SmallItem><ItemCell $w={33}><Eraser /></ItemCell><Chev /></SmallItem>
            </SmallColumn>
            <BigTool $w={94} $ml={1}>
              <BigTop><SortIcon /><Chev /></BigTop>
              <BigLabel>Sort &amp;<br />Filter</BigLabel>
            </BigTool>
            <BigTool $w={100}>
              <BigTop><FindIcon /><Chev /></BigTop>
              <BigLabel>Find &amp;<br />Select</BigLabel>
            </BigTool>
          </Group>

          <Group $w={130} $pl={0} $last>
            <BigTool $w={128}>
              <BigTop><AnalyzeIcon /></BigTop>
              <BigLabel>Analyze<br />Data</BigLabel>
            </BigTool>
          </Group>
        </Ribbon>
      </RibbonShell>

      <FormulaBar>
        <NameBox>
          G15
          <Spinner><Tri up c="#707070" /><Tri c="#707070" /></Spinner>
        </NameBox>
        <Tool $ml={30}><CrossIcon /></Tool>
        <Tool $ml={34}><CheckIcon /></Tool>
        <Fx>fx</Fx>
        <FormulaSep />
        <FormulaEnd><Tri c="#7d7d7d" /></FormulaEnd>
      </FormulaBar>

      <SheetViewport>
        <Sheet>
          <colgroup>
            {widths.map((w, i) => (
              <col key={i} style={{ width: w }} />
            ))}
          </colgroup>
          <tbody>
            <Row $h={53}>
              <Corner />
              <ColHead>A</ColHead>
              <ColHead>B</ColHead>
              <ColHead>C</ColHead>
              <ColHead>D</ColHead>
              <ColHead>E</ColHead>
              <ColHead>F</ColHead>
              <ColHead $sel>G</ColHead>
              {colHeads.map((c) => (
                <ColHead key={c}>{c}</ColHead>
              ))}
            </Row>
            <Row $h={28}>
              <RowHead>1</RowHead>
              <Blank />
              <Note colSpan={4}>Pivot table - do not key in anything in this worksheet as all input originates from Data tab.</Note>
            </Row>
            <Row $h={28}>
              <RowHead>2</RowHead>
            </Row>
            <Row $h={32}>
              <RowHead>3</RowHead>
              <Blank />
              <KpiCell $top $noBottom $up>Sum of Weightage</KpiCell>
              <ValCell $top $noBottom $bold>
                KPI Owner !
                <FilterBtn><Tri /></FilterBtn>
              </ValCell>
              <ValCell $top $noBottom />
              <ValCell $top $noBottom />
            </Row>
            <Row $h={32}>
              <RowHead>4</RowHead>
              <Blank />
              <KpiCell $up>
                KPI !
                <FilterBtn><Tri /></FilterBtn>
              </KpiCell>
              <ValCell $bold>JANE DOE</ValCell>
              <ValCell $bold>JAVIER DOVE</ValCell>
              <ValCell $bold>JANET DIVE</ValCell>
            </Row>
            {kpis.map((k, i) => {
              const rowNo = i + 5;
              const gray = i % 2 === 0;
              return (
                <Row key={k.n} $h={k.h ?? 32}>
                  <RowHead $sel={rowNo === 15} $tall={!!k.h}>{rowNo}</RowHead>
                  <NumCell $pink={i > 0}>{k.n}</NumCell>
                  <KpiCell $gray={gray}>{k.t}</KpiCell>
                  <ValCell $gray={gray}>{k.c}</ValCell>
                  <ValCell $gray={gray}>{k.d}</ValCell>
                  <ValCell $gray={gray}>{k.e}</ValCell>
                  {rowNo === 15 && (
                    <>
                      <Blank />
                      <SelectedCell />
                    </>
                  )}
                </Row>
              );
            })}
            <Row $h={32}>
              <RowHead>20</RowHead>
              <Blank />
              <KpiCell $up>Grand Total</KpiCell>
              <ValCell $bold>1</ValCell>
              <ValCell $bold>1</ValCell>
              <ValCell $bold>1</ValCell>
            </Row>
            {trailing.map((n) => (
              <Row key={n} $h={28}>
                <RowHead>{n}</RowHead>
              </Row>
            ))}
          </tbody>
        </Sheet>
      </SheetViewport>

      <TabBar>
        <TabNav>
          <ArrowSide />
          <ArrowSide right />
        </TabNav>
        <SheetTab $bg="#000" $fg="#fff" $w={144}>Content</SheetTab>
        <SheetTab $bg="#0070c0" $fg="#fff" $w={144}>KPI</SheetTab>
        <SheetTab $bg="#ff0000" $fg="#fff" $w={144}>Data</SheetTab>
        <ActiveTab>
          <ActiveInner>KPI Weightage Matrix</ActiveInner>
        </ActiveTab>
        <SheetTab $bg="#ff66ff" $fg="#000" $w={285}>Scorecard Template</SheetTab>
        <AddTab><Plus /></AddTab>
      </TabBar>
      <StatusBar>
        <StatusText>Ready</StatusText>
        <StatusText $ml={39}><A11yIcon /></StatusText>
        <StatusText $ml={6}>Accessibility: Investigate</StatusText>
        <StatusRight>
          <ViewBtn $active $w={74}><GridView /></ViewBtn>
          <ViewBtn $w={72}><PageView /></ViewBtn>
          <ViewBtn $w={72}><BreakView /></ViewBtn>
          <Minus />
          <Slider />
          <Plus s={18} c="#777" t={4} />
          <Zoom>120%</Zoom>
        </StatusRight>
      </StatusBar>
      <Thumb><Miniature /></Thumb>
    </Page>
  );
}
